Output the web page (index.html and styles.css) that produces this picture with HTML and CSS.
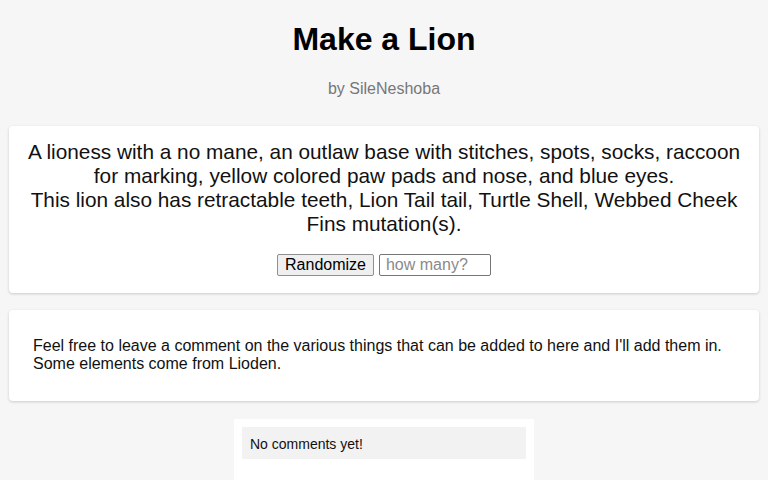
FILE: index.html
```html
<!DOCTYPE html>
<html>
<head>
<meta charset="utf-8">
<link rel="stylesheet" href="styles.css">
</head>
<body>
<header class="head">
  <h1 class="title">Make a Lion</h1>
  <div class="author">by SileNeshoba</div>
</header>
<main class="page">
  <section class="card result">
    <p class="desc">A lioness with a no mane, an outlaw base with stitches, spots, socks, raccoon for marking, yellow colored paw pads and nose, and blue eyes.<br>This lion also has retractable teeth, Lion Tail tail, Turtle Shell, Webbed Cheek Fins mutation(s).</p>
    <div class="controls">
      <button class="btn">Randomize</button>
      <input class="count" type="text" placeholder="how many?">
    </div>
  </section>
  <section class="card note">
    <p class="note-text">Feel free to leave a comment on the various things that can be added to here and I'll add them in.<br>Some elements come from Lioden.</p>
  </section>
  <section class="comments">
    <div class="comment-empty">No comments yet!</div>
  </section>
</main>
</body>
</html>
```
FILE: styles.css
```css
* { box-sizing: border-box; }
html, body { margin: 0; padding: 0; }
body {
  background: #f6f6f6;
  font-family: "Liberation Sans", Arial, sans-serif;
  color: #111;
  height: 480px;
  overflow: hidden;
}
.head {
  text-align: center;
  padding-top: 20px;
}
.title {
  margin: 0;
  font-size: 32px;
  line-height: 38px;
  font-weight: bold;
  color: #000;
}
.author {
  margin-top: 22px;
  font-size: 16px;
  line-height: 18px;
  color: #777;
}
.page {
  padding: 0 9px;
  margin-top: 28px;
  display: flex;
  flex-direction: column;
  align-items: stretch;
}
.card {
  background: #fff;
  border-radius: 4px;
  box-shadow: 0 1px 3px rgba(0,0,0,0.18);
}
.result {
  padding: 14px 16px 17px;
  text-align: center;
}
.desc {
  margin: 0;
  font-size: 20.8px;
  line-height: 24px;
  color: #111;
}
.controls {
  margin-top: 18px;
  display: flex;
  justify-content: center;
  gap: 5px;
}
.btn {
  font-family: "Liberation Sans", Arial, sans-serif;
  font-size: 16px;
  height: 22px;
  padding: 0 7px;
  background: #efefef;
  border: 1px solid #8f8f8f;
  border-radius: 2px;
  color: #000;
  line-height: 18px;
}
.count {
  font-family: "Liberation Sans", Arial, sans-serif;
  font-size: 16px;
  width: 112px;
  height: 22px;
  padding: 0 6px;
  border: 1px solid #767676;
  border-radius: 2px;
  background: #fff;
}
.count::placeholder { color: #8a8a8a; }
.note {
  margin-top: 17px;
  padding: 27px 24px 28px;
}
.note-text {
  margin: 0;
  font-size: 16px;
  line-height: 18px;
  color: #111;
}
.comments {
  align-self: center;
  width: 300px;
  margin-top: 18px;
  background: #fff;
  padding: 8px 8px 30px;
}
.comment-empty {
  background: #f2f2f2;
  padding: 9px 8px 7px;
  font-size: 14px;
  line-height: 16px;
  color: #111;
}
```
